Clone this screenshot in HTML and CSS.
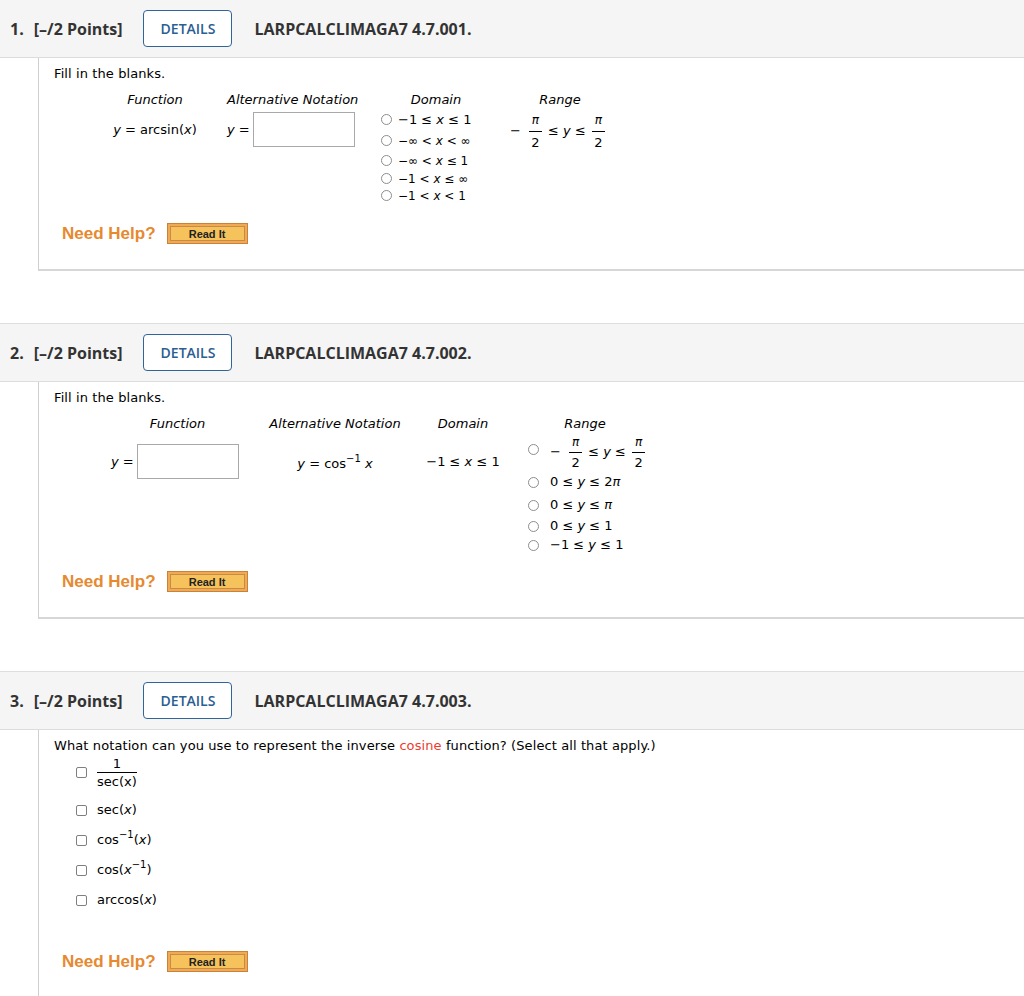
FILE: index.html
```html
<!DOCTYPE html>
<html>
<head>
<meta charset="utf-8">
<link rel="stylesheet" href="styles.css">
</head>
<body>

<section class="q q-first">
  <div class="qhead">
    <span class="qnum">1.</span><span class="pts">[–/2 Points]</span><span class="details">DETAILS</span><span class="qid">LARPCALCLIMAGA7 4.7.001.</span>
  </div>
  <div class="qbody">
    <p class="prompt">Fill in the blanks.</p>
    <div class="tbl t1">
      <div class="th">Function</div>
      <div class="th th-left">Alternative Notation</div>
      <div class="th">Domain</div>
      <div class="th">Range</div>

      <div class="t1-c1"><i>y</i> = arcsin(<i>x</i>)</div>
      <div class="t1-c2"><i>y</i> =<span class="box"></span></div>
      <ul class="radios t1-c3">
        <li class="h21"><span class="radio"></span><span class="lbl">−1 ≤ <i>x</i> ≤ 1</span></li>
        <li class="h21"><span class="radio"></span><span class="lbl sm">−∞ &lt; <i>x</i> &lt; ∞</span></li>
        <li class="h19"><span class="radio"></span><span class="lbl sm">−∞ &lt; <i>x</i> ≤ 1</span></li>
        <li class="h17"><span class="radio"></span><span class="lbl sm">−1 &lt; <i>x</i> ≤ ∞</span></li>
        <li class="h17"><span class="radio"></span><span class="lbl sm">−1 &lt; <i>x</i> &lt; 1</span></li>
      </ul>
      <div class="t1-c4"><span class="minus">−</span><span class="frac frac-tall"><span class="num"><i>π</i></span><span class="den">2</span></span><span class="rel">≤ <i>y</i> ≤</span><span class="frac frac-tall"><span class="num"><i>π</i></span><span class="den">2</span></span></div>
    </div>
    <div class="help help-q1"><span class="need">Need Help?</span><span class="readit"><span class="readit-in">Read It</span></span></div>
  </div>
</section>

<section class="q">
  <div class="qhead">
    <span class="qnum">2.</span><span class="pts">[–/2 Points]</span><span class="details">DETAILS</span><span class="qid">LARPCALCLIMAGA7 4.7.002.</span>
  </div>
  <div class="qbody">
    <p class="prompt">Fill in the blanks.</p>
    <div class="tbl t2">
      <div class="th">Function</div>
      <div class="th">Alternative Notation</div>
      <div class="th">Domain</div>
      <div class="th">Range</div>

      <div class="t2-c1"><i>y</i> =<span class="box"></span></div>
      <div class="t2-c2"><i>y</i> = cos<sup>−1</sup> <i>x</i></div>
      <div class="t2-c3">−1 ≤ <i>x</i> ≤ 1</div>
      <ul class="radios t2-c4">
        <li class="r1"><span class="radio"></span><span class="lbl"><span class="minus">−</span><span class="frac"><span class="num"><i>π</i></span><span class="den">2</span></span><span class="rel">≤ <i>y</i> ≤</span><span class="frac"><span class="num"><i>π</i></span><span class="den">2</span></span></span></li>
        <li class="r2"><span class="radio"></span><span class="lbl">0 ≤ <i>y</i> ≤ 2<i>π</i></span></li>
        <li class="r3"><span class="radio"></span><span class="lbl">0 ≤ <i>y</i> ≤ <i>π</i></span></li>
        <li class="r4"><span class="radio"></span><span class="lbl">0 ≤ <i>y</i> ≤ 1</span></li>
        <li class="r5"><span class="radio"></span><span class="lbl">−1 ≤ <i>y</i> ≤ 1</span></li>
      </ul>
    </div>
    <div class="help help-q2"><span class="need">Need Help?</span><span class="readit"><span class="readit-in">Read It</span></span></div>
  </div>
</section>

<section class="q">
  <div class="qhead">
    <span class="qnum">3.</span><span class="pts">[–/2 Points]</span><span class="details">DETAILS</span><span class="qid">LARPCALCLIMAGA7 4.7.003.</span>
  </div>
  <div class="qbody qbody-last">
    <p class="prompt">What notation can you use to represent the inverse <span class="red">cosine</span> function? (Select all that apply.)</p>
    <ul class="checks">
      <li class="c-frac"><span class="check"></span><span class="lbl"><span class="frac frac-wide"><span class="num">1</span><span class="den">sec(x)</span></span></span></li>
      <li><span class="check"></span><span class="lbl">sec(<i>x</i>)</span></li>
      <li><span class="check"></span><span class="lbl">cos<sup>−1</sup>(<i>x</i>)</span></li>
      <li><span class="check"></span><span class="lbl">cos(<i>x</i><sup>−1</sup>)</span></li>
      <li><span class="check"></span><span class="lbl">arccos(<i>x</i>)</span></li>
    </ul>
    <div class="help help-q3"><span class="need">Need Help?</span><span class="readit"><span class="readit-in">Read It</span></span></div>
  </div>
</section>

</body>
</html>
```

FILE: styles.css
```css
* { box-sizing: border-box; }

body {
  margin: 0;
  background: #fff;
  color: #000;
  font-family: "DejaVu Sans", Verdana, sans-serif;
  font-size: 13px;
  line-height: 18px;
  overflow: hidden;
}

.q { margin-top: 52px; }
.q-first { margin-top: -1px; }

.qhead {
  display: flex;
  align-items: center;
  height: 59px;
  padding-left: 10px;
  background: #f5f5f5;
  border-top: 1px solid #dedede;
  border-bottom: 1px solid #dcdcdc;
  font-family: "Open Sans", sans-serif;
  font-weight: 700;
  font-size: 16px;
  color: #333;
}

.qnum { margin-right: 10px; }

.details {
  display: inline-flex;
  align-items: center;
  justify-content: center;
  width: 89px;
  height: 37px;
  margin-left: 21px;
  margin-right: 22px;
  border: 1px solid #2f659b;
  border-radius: 4px;
  background: #fff;
  color: #2b5e92;
  font-size: 14px;
  font-weight: 600;
}

.qbody {
  margin-left: 38px;
  border-left: 1px solid #cfcfcf;
  border-bottom: 2px solid #d6d6d6;
  padding: 7px 0 25px 15px;
}

.qbody-last { border-bottom: none; padding-bottom: 60px; }

.prompt { margin: 0; letter-spacing: 0.1px; }

.red { color: #ee3b2e; }

i { font-style: italic; }

sup {
  font-size: 10px;
  line-height: 0;
  vertical-align: 6px;
}

/* radio / check lists (base) */
.radios,
.checks {
  list-style: none;
  margin: 0;
  padding: 0;
}

.radios li,
.checks li {
  display: flex;
  align-items: center;
  white-space: nowrap;
}

.radio {
  flex: none;
  width: 11px;
  height: 11px;
  border: 1px solid #8d8d8d;
  border-radius: 50%;
  background: #fff;
  margin-right: 6px;
}

.check {
  flex: none;
  width: 11px;
  height: 11px;
  margin-right: 10px;
  border: 1px solid #7f7f7f;
  border-radius: 2px;
  background: #fff;
}

.sm { font-size: 12px; }

/* tables */
.tbl {
  display: grid;
  margin-top: 8px;
  margin-left: 46px;
  row-gap: 3px;
  align-items: start;
}

.t1 { grid-template-columns: 110px 160px 132px 116px; }
.t2 { grid-template-columns: 155px 160px 96px 148px; }

.th {
  font-style: italic;
  text-align: center;
  white-space: nowrap;
}

.th-left { text-align: left; padding-left: 17px; }

.box {
  display: inline-block;
  width: 102px;
  height: 35px;
  margin-left: 3px;
  border: 1px solid #a9a9a9;
  background: #fff;
  vertical-align: top;
}

.t1-c1 {
  height: 35px;
  line-height: 35px;
  text-align: center;
  white-space: nowrap;
}

.t1-c2 {
  height: 35px;
  line-height: 35px;
  padding-left: 17px;
  white-space: nowrap;
}

.tbl .t1-c3 {
  margin-top: -3px;
  margin-left: 11px;
  justify-self: start;
}

.t1-c4 {
  height: 35px;
  line-height: 35px;
  text-align: center;
  white-space: nowrap;
}

.t2-c1 {
  height: 35px;
  line-height: 35px;
  margin-top: 8px;
  margin-left: 11px;
  justify-self: start;
  white-space: nowrap;
}

.t2-c2 {
  margin-top: 19px;
  text-align: center;
  white-space: nowrap;
}

.t2-c3 {
  margin-top: 17px;
  text-align: center;
  white-space: nowrap;
}

.tbl .t2-c4 {
  margin-left: 17px;
  justify-self: start;
}

.t2-c4 .radio { margin-right: 11px; }

.h21 { height: 21px; }
.h19 { height: 19px; }
.h17 { height: 17px; }

.r1 { height: 33px; }
.r2 { height: 26px; }
.r3 { height: 20px; }
.r4 { height: 22px; }
.r5 { height: 16px; }

.r1 .radio { margin-top: -6px; }

/* fractions */
.frac {
  display: inline-flex;
  flex-direction: column;
  align-items: center;
  vertical-align: middle;
  margin: 0 5px;
  line-height: 15px;
}

.frac .num {
  display: block;
  padding: 0 3px 2px;
  border-bottom: 1px solid #000;
  line-height: 15px;
  font-size: 12px;
}

.frac .den {
  display: block;
  padding-top: 2px;
  line-height: 16px;
}

.frac-tall .num { padding-bottom: 3px; line-height: 16px; }
.frac-tall .den { padding-top: 3px; }

.minus { margin-right: 3px; }
.rel { margin: 0 1px; }

/* checkboxes */
.checks {
  margin-top: 1px;
  padding-left: 22px;
}

.checks li {
  height: 18px;
  margin-top: 12px;
}

.checks li.c-frac {
  height: 33px;
  margin-top: 0;
}

.frac-wide { margin: 0; }
.frac-wide .num { width: 100%; padding: 0 2px 1px; font-size: 13px; text-align: center; }
.frac-wide .den { padding-top: 1px; }

/* need help */
.help {
  display: flex;
  align-items: center;
  height: 21px;
  padding-left: 8px;
}

.help-q1 { margin-top: 19px; }
.help-q2 { margin-top: 18px; }
.help-q3 { margin-top: 42px; }

.need {
  font-family: "Liberation Sans", Arial, sans-serif;
  font-weight: 700;
  font-size: 17px;
  color: #e6892f;
  margin-right: 11px;
}

.readit {
  display: inline-flex;
  width: 81px;
  height: 21px;
  padding: 2px;
  border: 1px solid #c98236;
  background: #f0aa55;
}

.readit-in {
  flex: 1;
  display: flex;
  align-items: center;
  justify-content: center;
  border: 1px solid #c88a44;
  background: #f6c25c;
  font-family: "Liberation Sans", Arial, sans-serif;
  font-weight: 700;
  font-size: 11px;
  color: #222;
}
```
